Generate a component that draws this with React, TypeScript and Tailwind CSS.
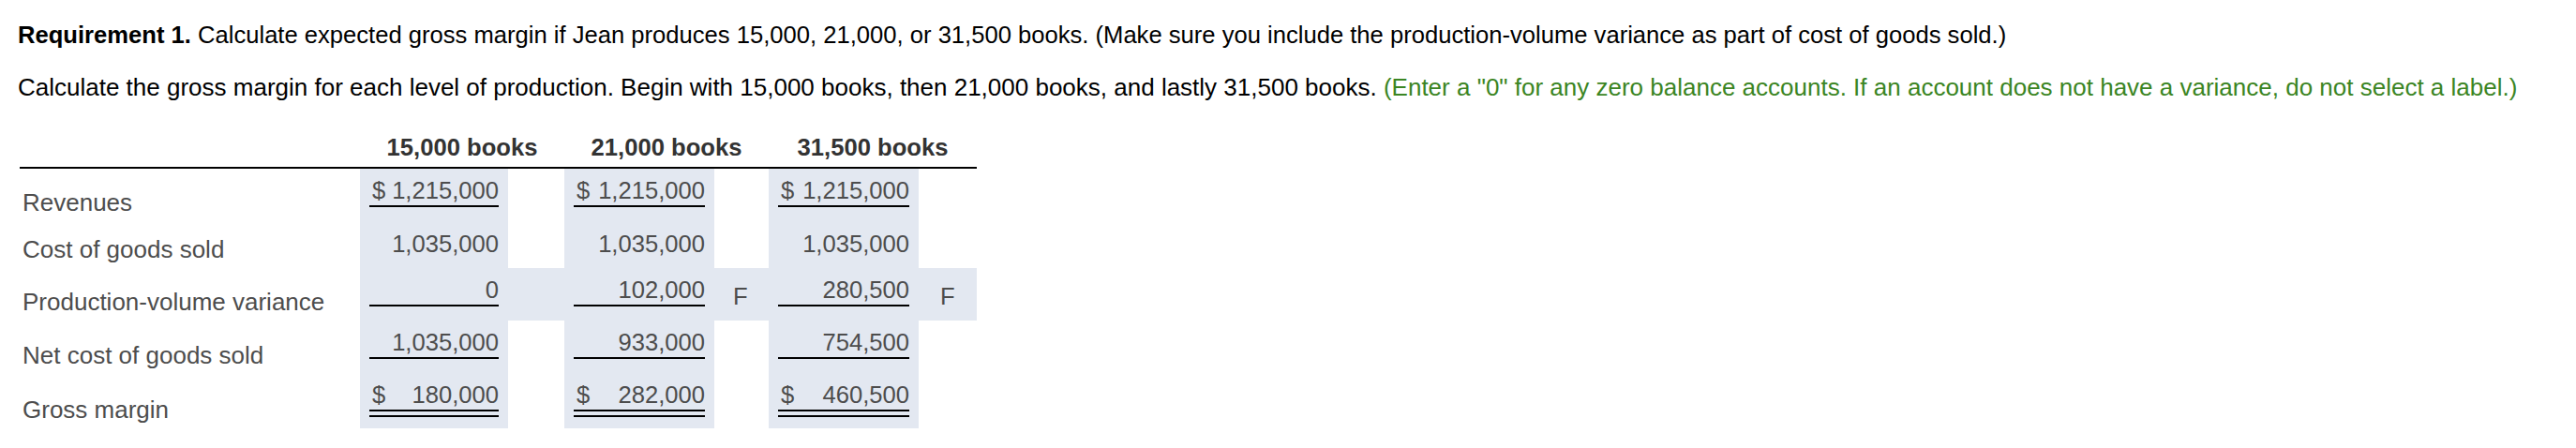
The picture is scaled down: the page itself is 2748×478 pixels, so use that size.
const rows = [
  {
    label: "Revenues",
    rowH: "h-[57px]",
    labelPb: "pb-[5px]",
    line: "single",
    cells: [
      { sign: "$", value: "1,215,000", mark: "" },
      { sign: "$", value: "1,215,000", mark: "" },
      { sign: "$", value: "1,215,000", mark: "" },
    ],
  },
  {
    label: "Cost of goods sold",
    rowH: "h-[49px]",
    labelPb: "pb-[4px]",
    line: "none",
    cells: [
      { sign: "", value: "1,035,000", mark: "" },
      { sign: "", value: "1,035,000", mark: "" },
      { sign: "", value: "1,035,000", mark: "" },
    ],
  },
  {
    label: "Production-volume variance",
    rowH: "h-[56px]",
    labelPb: "pb-[4px]",
    line: "single",
    shaded: true,
    cells: [
      { sign: "", value: "0", mark: "" },
      { sign: "", value: "102,000", mark: "F" },
      { sign: "", value: "280,500", mark: "F" },
    ],
  },
  {
    label: "Net cost of goods sold",
    rowH: "h-[56px]",
    labelPb: "pb-[3px]",
    line: "single",
    cells: [
      { sign: "", value: "1,035,000", mark: "" },
      { sign: "", value: "933,000", mark: "" },
      { sign: "", value: "754,500", mark: "" },
    ],
  },
  {
    label: "Gross margin",
    rowH: "h-[59px]",
    labelPb: "pb-[4px]",
    line: "double",
    cells: [
      { sign: "$", value: "180,000", mark: "" },
      { sign: "$", value: "282,000", mark: "" },
      { sign: "$", value: "460,500", mark: "" },
    ],
  },
];

const headers = ["15,000 books", "21,000 books", "31,500 books"];
// width of the label column after each value column
const markCols = ["w-[60px] pl-[20px]", "w-[58px] pl-[20px]", "w-[62px] pl-[23px]"];
const valueCols = ["w-[158px]", "w-[160px]", "w-[160px]"];
const headerCols = ["w-[218px]", "w-[218px]", "w-[222px]"];

const App = () => {
  return (
    <div className="min-h-screen bg-white pl-[19px] pt-[22px] font-['Liberation_Sans',Arial,sans-serif] text-[25.6px]">
      <p className="leading-[30px] text-black">
        <span className="font-bold">Requirement 1.</span> Calculate expected gross margin if Jean produces 15,000,
        21,000, or 31,500 books. (Make sure you include the production-volume variance as part of cost of goods sold.)
      </p>
      <p className="mt-[26px] text-[26px] leading-[30px] text-black">
        Calculate the gross margin for each level of production. Begin with 15,000 books, then 21,000 books, and lastly
        31,500 books.{" "}
        <span className="text-[#3b8523]">
          (Enter a "0" for any zero balance accounts. If an account does not have a variance, do not select a label.)
        </span>
      </p>

      {/* Table */}
      <div className="ml-[2px] mt-[33px] w-[1021px]">
        <div className="flex border-b-2 border-black pb-[5px]">
          <div className="w-[363px]" />
          {headers.map((h, i) => (
            <div key={h} className={`${headerCols[i]} text-center font-bold leading-[32px] text-[#333333]`}>
              {h}
            </div>
          ))}
        </div>

        {rows.map((row) => (
          <div key={row.label} className={`flex ${row.rowH}`}>
            <div
              className={`flex w-[363px] items-end pl-[3px] text-[26px] leading-[32px] text-[#4d4d4d] ${row.labelPb}`}
            >
              {row.label}
            </div>
            {row.cells.map((c, i) => (
              <div key={i} className="flex">
                <div className={`${valueCols[i]} bg-[#e3e8f1] px-[10px] pt-[7px]`}>
                  <div
                    className={`flex justify-between border-b-2 pl-[3px] leading-[32px] text-[#4d4d4d] ${
                      row.line === "none" ? "border-transparent" : "border-black"
                    }`}
                  >
                    <span>{c.sign}</span>
                    <span>{c.value}</span>
                  </div>
                  {row.line === "double" && <div className="mt-[4px] h-[2px] bg-black" />}
                </div>
                <div
                  className={`${markCols[i]} pt-[14px] leading-[32px] text-[#4d4d4d] ${
                    row.shaded ? "bg-[#e3e8f1]" : "bg-white"
                  }`}
                >
                  {c.mark}
                </div>
              </div>
            ))}
          </div>
        ))}
      </div>
    </div>
  );
};

export default App;
